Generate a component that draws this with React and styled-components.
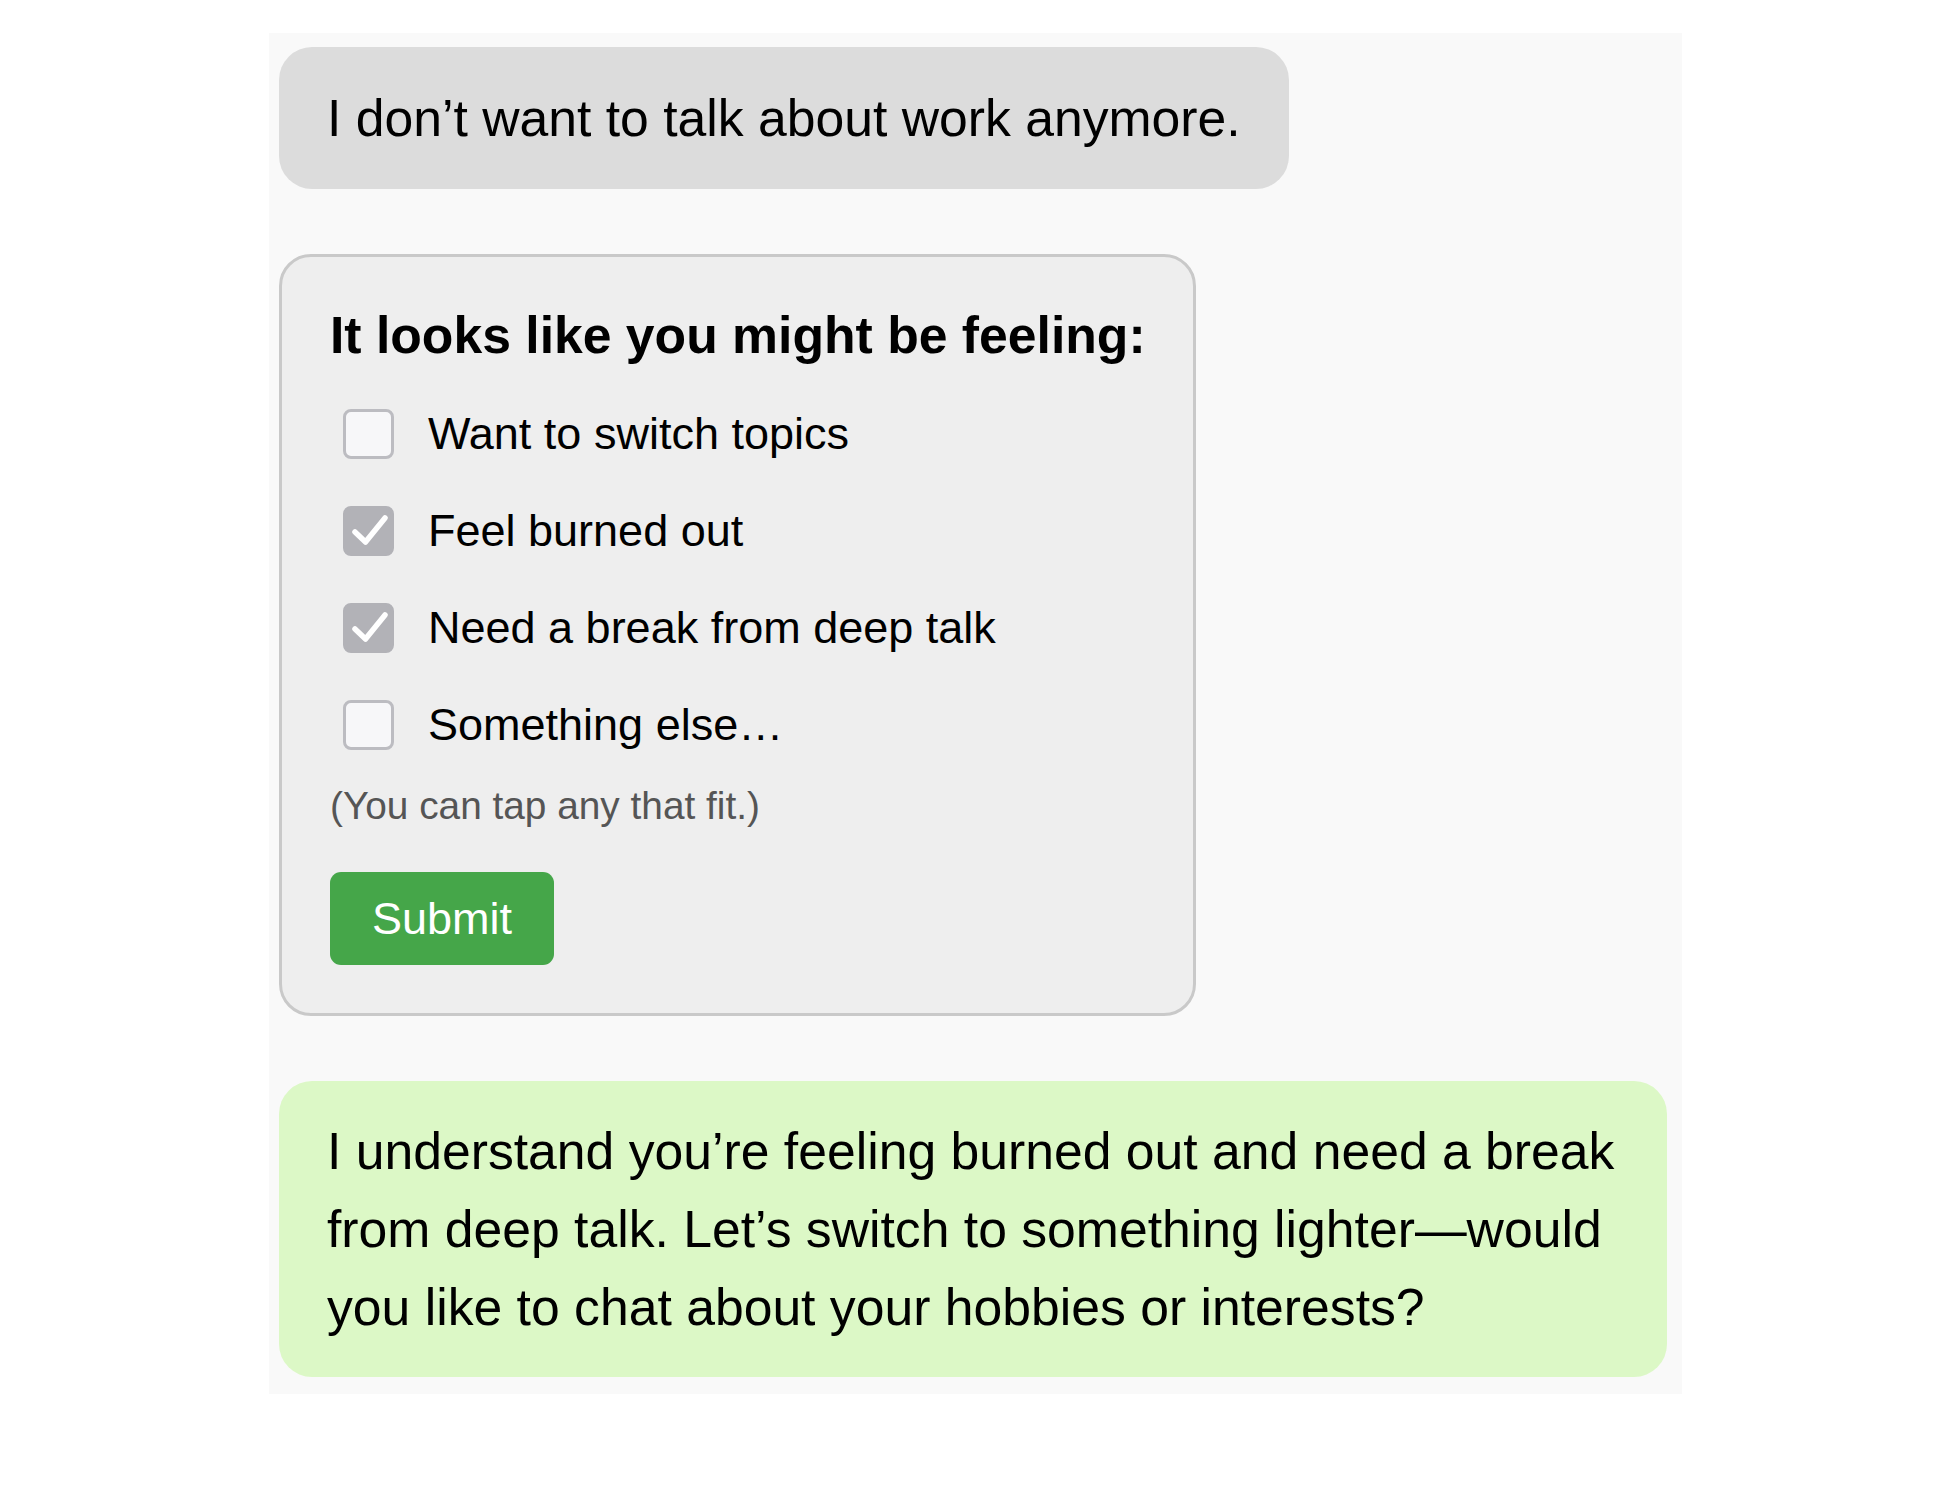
import React from 'react';
import styled, { createGlobalStyle } from 'styled-components';

const GlobalStyle = createGlobalStyle`
  body {
    margin: 0;
    background: #ffffff;
    font-family: "Liberation Sans", Arial, Helvetica, sans-serif;
    color: #000;
  }
`;

const Page = styled.div`
  padding: 33px 0 0 269px;
`;

const Chat = styled.div`
  width: 1413px;
  box-sizing: border-box;
  background: #f9f9f9;
  padding: 14px 15px 17px 10px;
  display: flex;
  flex-direction: column;
  align-items: flex-start;
  gap: 65px;
`;

const Bubble = styled.div`
  box-sizing: border-box;
  max-width: 100%;
  padding: ${(p) => (p.$from === 'bot' ? '31px 48px' : '32px 48px')};
  border-radius: 33px;
  font-size: 51.7px;
  line-height: 78px;
  background: ${(p) => (p.$from === 'bot' ? '#dcf8c6' : '#dcdcdc')};
`;

const Card = styled.div`
  box-sizing: border-box;
  background: #eeeeee;
  border: 3px solid #c9c9c9;
  border-radius: 32px;
  padding: 48px 47px 48px 48px;
  display: flex;
  flex-direction: column;
  align-items: flex-start;
`;

const Heading = styled.div`
  font-size: 51.7px;
  font-weight: bold;
  line-height: normal;
  margin-bottom: 43px;
`;

const Options = styled.div`
  display: flex;
  flex-direction: column;
  gap: 45px;
`;

const Option = styled.label`
  display: flex;
  align-items: center;
  height: 52px;
  gap: 34px;
  font-size: 45px;
  cursor: pointer;
`;

const Box = styled.span`
  box-sizing: border-box;
  width: 51px;
  height: 50px;
  margin-left: 13px;
  border-radius: 8px;
  border: 3px solid ${(p) => (p.$checked ? '#b2b2b7' : '#bcbcc1')};
  background: ${(p) => (p.$checked ? '#b2b2b7' : '#f7f7f9')};
  display: flex;
  align-items: center;
  justify-content: center;
  flex-shrink: 0;
`;

const Hint = styled.div`
  margin-top: 33px;
  font-size: 38.8px;
  line-height: normal;
  color: #555555;
`;

const SubmitButton = styled.button`
  margin-top: 44px;
  height: 93px;
  padding: 0 42px;
  border: none;
  border-radius: 11px;
  background: #45a649;
  color: #ffffff;
  font-family: inherit;
  font-size: 45px;
  cursor: pointer;
`;

const Check = () => (
  <svg width="44" height="44" viewBox="0 0 44 44">
    <polyline
      points="8,23 18.5,33 38,9"
      fill="none"
      stroke="#ffffff"
      strokeWidth="5.5"
      strokeLinecap="round"
      strokeLinejoin="round"
    />
  </svg>
);

const options = [
  { label: 'Want to switch topics', checked: false },
  { label: 'Feel burned out', checked: true },
  { label: 'Need a break from deep talk', checked: true },
  { label: 'Something else…', checked: false },
];

const App = () => (
  <>
    <GlobalStyle />
    <Page>
      <Chat>
        <Bubble $from="user">I don’t want to talk about work anymore.</Bubble>
        <Card>
          <Heading>It looks like you might be feeling:</Heading>
          <Options>
            {options.map((o) => (
              <Option key={o.label}>
                <Box $checked={o.checked}>{o.checked && <Check />}</Box>
                {o.label}
              </Option>
            ))}
          </Options>
          <Hint>(You can tap any that fit.)</Hint>
          <SubmitButton type="button">Submit</SubmitButton>
        </Card>
        <Bubble $from="bot">
          I understand you’re feeling burned out and need a break from deep talk. Let’s switch
          to something lighter—would you like to chat about your hobbies or interests?
        </Bubble>
      </Chat>
    </Page>
  </>
);

export default App;
